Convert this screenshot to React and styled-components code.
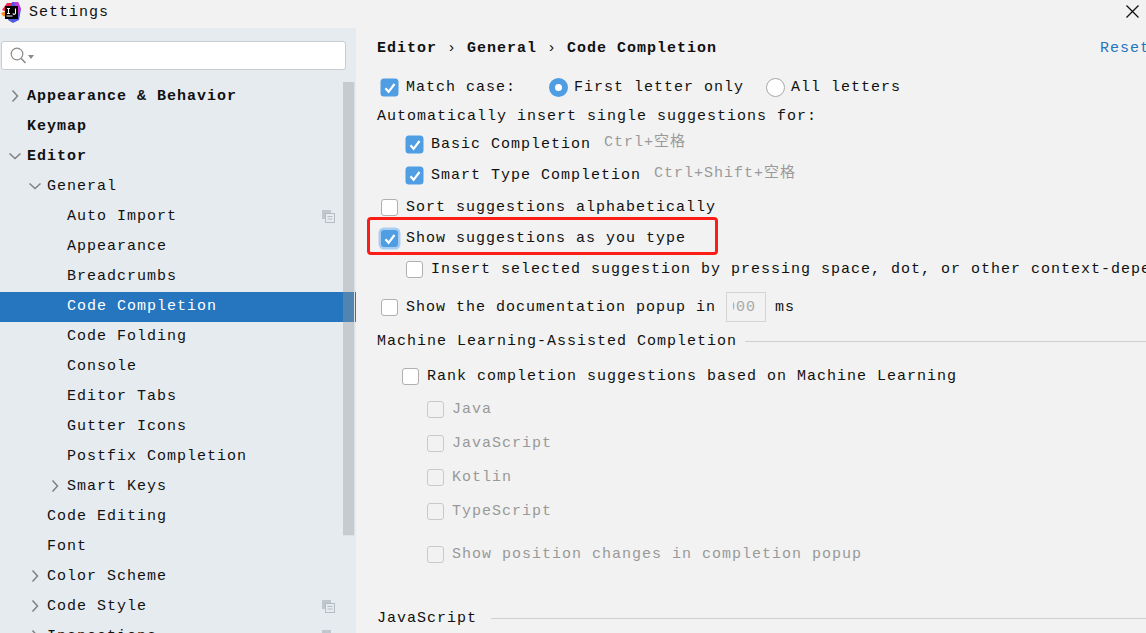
import styled, { createGlobalStyle } from 'styled-components'

const GlobalStyle = createGlobalStyle`
  html, body {
    margin: 0;
    padding: 0;
    overflow: hidden;
  }
`

const Window = styled.div`
  width: 1146px;
  height: 633px;
  overflow: hidden;
  display: flex;
  flex-direction: column;
  background: #f2f2f2;
  color: #111;
  font-family: 'Liberation Mono', 'Noto Sans CJK SC', monospace;
  font-size: 15px;
  letter-spacing: 1px;
`

const TitleBar = styled.div`
  flex: 0 0 28px;
  box-sizing: border-box;
  display: flex;
  align-items: center;
  padding: 0 7px 4px 1px;
  gap: 7px;
`

const CloseButton = styled.div`
  margin-left: auto;
  margin-bottom: 1px;
  display: flex;
`

const Body = styled.div`
  flex: 1;
  display: flex;
  min-height: 0;
`

const Sidebar = styled.aside`
  position: relative;
  flex: 0 0 356px;
  background: #e6ebf0;
  overflow: hidden;
  padding-top: 13px;
  box-sizing: border-box;
`

const Search = styled.div`
  height: 29px;
  width: 345px;
  margin-left: 1px;
  box-sizing: border-box;
  display: flex;
  align-items: center;
  padding-left: 8px;
  background: #fff;
  border: 1px solid #c9cdd1;
  border-radius: 3px;
`

const Caret = styled.span`
  width: 0;
  height: 0;
  margin-left: 1px;
  margin-top: 2px;
  border-left: 3px solid transparent;
  border-right: 3px solid transparent;
  border-top: 4px solid #8a8a8a;
`

const Tree = styled.ul`
  list-style: none;
  margin: 10px 0 0;
  padding: 0;
`

// the selection band sits 2px lower than the row text in the reference
const TreeRow = styled.li`
  height: 30px;
  box-sizing: border-box;
  display: flex;
  align-items: center;
  padding: 2px 21px 0 ${(p) => 7 + p.$level * 20}px;
  background: ${(p) =>
    p.$selected ? 'linear-gradient(transparent 2px, #2675bf 2px)' : 'transparent'};
  box-shadow: ${(p) => (p.$selected ? '0 2px 0 #2675bf' : 'none')};
  color: ${(p) => (p.$selected ? '#fff' : '#111')};
  font-weight: ${(p) => (p.$bold ? 700 : 400)};
`

const Arrow = styled.span`
  flex: 0 0 20px;
  box-sizing: border-box;
  padding-left: 2px;
  display: flex;
  align-items: center;
`

const ScrollBar = styled.div`
  position: absolute;
  right: 1px;
  top: 54px;
  width: 12px;
  height: 454px;
  box-sizing: border-box;
  background: rgba(150, 155, 160, 0.4);
  border: 1px solid #dfe2e5;
  border-left: none;
  border-top: none;
`

const ProjectIcon = styled.svg`
  margin-left: auto;
  width: 14px;
  height: 14px;
`

const Main = styled.main`
  flex: 1;
  min-width: 0;
  padding: 8px 0 0 21px;
  box-sizing: border-box;
  overflow: hidden;
`

const Header = styled.div`
  height: 24px;
  display: flex;
  align-items: center;
  font-weight: 700;
  margin-right: -4px;
  margin-bottom: 12px;
`

const Crumb = styled.span`
  margin: 0 10px;
  font-weight: 400;
`

const ResetLink = styled.span`
  margin-left: auto;
  color: #2675bf;
  font-weight: 400;
`

const Row = styled.div`
  position: relative;
  height: ${(p) => p.$h || 31}px;
  margin-top: ${(p) => p.$mt || 0}px;
  display: flex;
  align-items: center;
  padding-left: ${(p) => p.$indent || 0}px;
  white-space: nowrap;
  color: ${(p) => (p.$disabled ? '#999' : 'inherit')};
`

const Highlight = styled.div`
  position: absolute;
  left: -10px;
  top: -6px;
  width: 351px;
  height: 38px;
  box-sizing: border-box;
  border: 3px solid #fa1e16;
  border-radius: 4px;
`

const Box = styled.span`
  flex: 0 0 17px;
  width: 17px;
  height: 17px;
  box-sizing: border-box;
  margin-right: 8px;
  display: flex;
  align-items: center;
  justify-content: center;
  border-radius: 3px;
  background: ${(p) => (p.$checked ? '#4f9ee3' : p.$disabled ? '#f2f2f2' : '#fff')};
  border: ${(p) => (p.$checked ? 'none' : `1px solid ${p.$disabled ? '#c9c9c9' : '#b0b0b0'}`)};
  box-shadow: ${(p) =>
    p.$focused ? '0 0 0 2.5px #a9cdf0' : p.$checked ? '0 0 0 0.5px #4f9ee3' : 'none'};
`

const Radio = styled.span`
  flex: 0 0 19px;
  height: 19px;
  box-sizing: border-box;
  margin-left: ${(p) => p.$ml}px;
  margin-right: 6px;
  border-radius: 50%;
  background: #fff;
  border: ${(p) => (p.$checked ? '6px solid #4f9ee3' : '1px solid #a8a8a8')};
`

const Shortcut = styled.span`
  margin-left: 13px;
  margin-bottom: 3px;
  line-height: 16px;
  color: #9a9a9a;
`

const NumberInput = styled.span`
  width: 40px;
  height: 30px;
  box-sizing: border-box;
  margin: 0 9px 0 10px;
  padding: 0 9px 0 6px;
  display: flex;
  align-items: center;
  border: 1px solid #d4d4d4;
  color: #a8a8a8;
`

const NumberValue = styled.span`
  flex: 1;
  min-width: 0;
  display: flex;
  justify-content: flex-end;
  overflow: hidden;
`

const SectionTitle = styled.div`
  height: ${(p) => p.$h || 34}px;
  margin-top: ${(p) => p.$mt || 0}px;
  display: flex;
  align-items: center;
  gap: ${(p) => p.$gap}px;
  white-space: nowrap;

  &::after {
    content: '';
    flex: 1;
    height: 1px;
    background: #cfcfcf;
  }
`

const Check = () => (
  <svg width="14" height="14" viewBox="0 0 14 14" fill="none">
    <path d="M2.5 7.2 5.6 10.8 11.5 3" stroke="#fff" strokeWidth="2.2" />
  </svg>
)

const SearchIcon = () => (
  <svg width="17" height="17" viewBox="0 0 17 17" fill="none" stroke="#8a8a8a" strokeWidth="1.2">
    <circle cx="7" cy="7" r="5.8" />
    <path d="M11 11.3 15.5 16" strokeWidth="1.6" />
  </svg>
)

const CloseIcon = () => (
  <svg width="13" height="13" viewBox="0 0 13 13" fill="none" stroke="#111" strokeWidth="1.3">
    <path d="M.5.5l12 12M12.5.5l-12 12" />
  </svg>
)

const ArrowIcon = ({ down }) => (
  <svg width="12" height="12" viewBox="0 0 12 12" fill="none" stroke="#808080" strokeWidth="1.5">
    <path d={down ? 'M.5 3.5 6 8.5 11.5 3.5' : 'M3.5.5 8.5 6 3.5 11.5'} />
  </svg>
)

const Project = () => (
  <ProjectIcon viewBox="0 0 14 14">
    <rect x="1" y="1" width="9" height="9" fill="#c0c8cf" />
    <rect x="4.5" y="4.5" width="9" height="9" fill="#e6ebf0" stroke="#b4bcc4" />
    <path d="M6.5 7.5h5M6.5 10h5" stroke="#b4bcc4" />
  </ProjectIcon>
)

const LogoIcon = () => (
  <svg width="21" height="21" viewBox="0 0 21 21">
    <path d="M1 8 6 1h6L9 11z" fill="#f0274f" />
    <path d="M0 11l6-2v6L2 14z" fill="#f98a1c" />
    <path d="M11 0h6l3 7-2 11-6 3-5-3z" fill="#4d5ae0" />
    <path d="M13 0h4l3 7-3 6z" fill="#c13ad6" />
    <rect x="4" y="4" width="13" height="13" fill="#000" />
    <path d="M5.5 14h6" stroke="#fff" strokeWidth="1" />
    <path d="M6 6.5h3M7.5 6.5v5M6 11.5h3M14.5 6.5v4.2a1.2 1.2 0 0 1-2.6.6" stroke="#fff" fill="none" strokeWidth="1.1" />
  </svg>
)

const tree = [
  { label: 'Appearance & Behavior', level: 0, arrow: 'right', bold: true },
  { label: 'Keymap', level: 0, bold: true },
  { label: 'Editor', level: 0, arrow: 'down', bold: true },
  { label: 'General', level: 1, arrow: 'down' },
  { label: 'Auto Import', level: 2, project: true },
  { label: 'Appearance', level: 2 },
  { label: 'Breadcrumbs', level: 2 },
  { label: 'Code Completion', level: 2, selected: true },
  { label: 'Code Folding', level: 2 },
  { label: 'Console', level: 2 },
  { label: 'Editor Tabs', level: 2 },
  { label: 'Gutter Icons', level: 2 },
  { label: 'Postfix Completion', level: 2 },
  { label: 'Smart Keys', level: 2, arrow: 'right' },
  { label: 'Code Editing', level: 1 },
  { label: 'Font', level: 1 },
  { label: 'Color Scheme', level: 1, arrow: 'right' },
  { label: 'Code Style', level: 1, arrow: 'right', project: true },
  { label: 'Inspections', level: 1, arrow: 'right', project: true },
]

function TreeItem({ item }) {
  return (
    <TreeRow $level={item.level} $selected={item.selected} $bold={item.bold}>
      <Arrow>{item.arrow && <ArrowIcon down={item.arrow === 'down'} />}</Arrow>
      {item.label}
      {item.project && <Project />}
    </TreeRow>
  )
}

export default function App() {
  return (
    <Window>
      <GlobalStyle />
      <TitleBar>
        <LogoIcon />
        Settings
        <CloseButton>
          <CloseIcon />
        </CloseButton>
      </TitleBar>
      <Body>
        <Sidebar>
          <Search>
            <SearchIcon />
            <Caret />
          </Search>
          <Tree>
            {tree.map((item) => (
              <TreeItem key={item.label} item={item} />
            ))}
          </Tree>
          <ScrollBar />
        </Sidebar>
        <Main>
          <Header>
            Editor<Crumb>›</Crumb>General<Crumb>›</Crumb>Code Completion
            <ResetLink>Reset</ResetLink>
          </Header>
          <Row $indent={4}>
            <Box $checked><Check /></Box>
            Match case:
            <Radio $checked $ml={33} />
            First letter only
            <Radio $ml={22} />
            All letters
          </Row>
          <Row $h={26}>Automatically insert single suggestions for:</Row>
          <Row $indent={29}>
            <Box $checked><Check /></Box>
            Basic Completion<Shortcut>Ctrl+空格</Shortcut>
          </Row>
          <Row $indent={29}>
            <Box $checked><Check /></Box>
            Smart Type Completion<Shortcut>Ctrl+Shift+空格</Shortcut>
          </Row>
          <Row $indent={4} $mt={1}>
            <Box />
            Sort suggestions alphabetically
          </Row>
          <Row $indent={4}>
            <Box $checked $focused><Check /></Box>
            Show suggestions as you type
            <Highlight />
          </Row>
          <Row $indent={29}>
            <Box />
            Insert selected suggestion by pressing space, dot, or other context-dependent keys
          </Row>
          <Row $indent={4} $h={38} $mt={3}>
            <Box />
            Show the documentation popup in
            <NumberInput><NumberValue>4000</NumberValue></NumberInput>
            ms
          </Row>
          <SectionTitle $h={30} $gap={8}>Machine Learning-Assisted Completion</SectionTitle>
          <Row $indent={25} $mt={4} $h={32}>
            <Box />
            Rank completion suggestions based on Machine Learning
          </Row>
          <Row $indent={50} $h={34} $disabled><Box $disabled />Java</Row>
          <Row $indent={50} $h={34} $disabled><Box $disabled />JavaScript</Row>
          <Row $indent={50} $h={34} $disabled><Box $disabled />Kotlin</Row>
          <Row $indent={50} $h={34} $disabled><Box $disabled />TypeScript</Row>
          <Row $indent={50} $h={34} $mt={9} $disabled><Box $disabled />Show position changes in completion popup</Row>
          <SectionTitle $mt={30} $gap={14}>JavaScript</SectionTitle>
        </Main>
      </Body>
    </Window>
  )
}
